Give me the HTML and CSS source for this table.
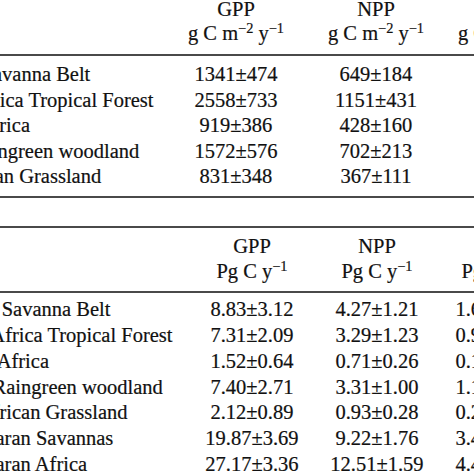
FILE: index.html
```html
<!DOCTYPE html>
<html>
<head>
<meta charset="utf-8">
<link rel="stylesheet" href="styles.css">
</head>
<body>
<div class="page">
  <table class="tbl tbl-density">
    <colgroup>
      <col class="c-label"><col class="c-num"><col class="c-num"><col class="c-last">
    </colgroup>
    <thead>
      <tr class="h1"><th></th><th>GPP</th><th>NPP</th><th></th></tr>
      <tr class="h2"><th></th><th>g C m<span class="sup">−2</span> y<span class="sup">−1</span></th><th>g C m<span class="sup">−2</span> y<span class="sup">−1</span></th><th>g C m<span class="sup">−2</span> y<span class="sup">−1</span></th></tr>
    </thead>
    <tbody>
      <tr class="first"><td>Guinean Savanna Belt</td><td>1341±474</td><td>649±184</td><td></td></tr>
      <tr><td>Central Africa Tropical Forest</td><td>2558±733</td><td>1151±431</td><td></td></tr>
      <tr><td>Western Africa</td><td>919±386</td><td>428±160</td><td></td></tr>
      <tr><td>Humid Raingreen woodland</td><td>1572±576</td><td>702±213</td><td></td></tr>
      <tr class="last"><td>West African Grassland</td><td>831±348</td><td>367±111</td><td></td></tr>
    </tbody>
  </table>

  <table class="tbl tbl-total">
    <colgroup>
      <col class="c-label"><col class="c-num"><col class="c-num2"><col class="c-last">
    </colgroup>
    <thead>
      <tr class="h1"><th></th><th>GPP</th><th>NPP</th><th></th></tr>
      <tr class="h2"><th></th><th>Pg C y<span class="sup">−1</span></th><th>Pg C y<span class="sup">−1</span></th><th>Pg C y<span class="sup">−1</span></th></tr>
    </thead>
    <tbody>
      <tr class="first"><td>Sahelian Savanna Belt</td><td>8.83±3.12</td><td>4.27±1.21</td><td>1.64±0.48</td></tr>
      <tr><td>Central Africa Tropical Forest</td><td>7.31±2.09</td><td>3.29±1.23</td><td>0.95±0.41</td></tr>
      <tr><td>Western Africa</td><td>1.52±0.64</td><td>0.71±0.26</td><td>0.18±0.07</td></tr>
      <tr><td>Eastern Raingreen woodland</td><td>7.40±2.71</td><td>3.31±1.00</td><td>1.19±0.36</td></tr>
      <tr><td>South African Grassland</td><td>2.12±0.89</td><td>0.93±0.28</td><td>0.27±0.10</td></tr>
      <tr><td>Sub-Saharan Savannas</td><td>19.87±3.69</td><td>9.22±1.76</td><td>3.45±0.66</td></tr>
      <tr class="last"><td>Sub-Saharan Africa</td><td>27.17±3.36</td><td>12.51±1.59</td><td>4.40±0.78</td></tr>
    </tbody>
  </table>
</div>
</body>
</html>
```

FILE: styles.css
```css
html, body {
  margin: 0;
  padding: 0;
  width: 474px;
  height: 474px;
  overflow: hidden;
  background: #ffffff;
}

.page {
  font-family: "Liberation Serif", "Times New Roman", serif;
  font-size: 20.5px;
  color: #111;
  -webkit-text-stroke: 0.2px #111;
  display: flex;
  flex-direction: column;
}

.tbl {
  border-collapse: collapse;
  table-layout: fixed;
}

.tbl th,
.tbl td {
  padding: 0;
  line-height: 25.4px;
  height: 25.4px;
  white-space: nowrap;
  text-align: center;
  font-weight: normal;
}

.tbl td:first-child,
.tbl th:first-child {
  text-align: left;
}

.sup {
  font-size: 0.7em;
  vertical-align: 0.5em;
  line-height: 0;
}

/* top table */
.tbl-density {
  width: 659px;
  margin-left: -93px;
}
.tbl-density .c-label { width: 259px; }
.tbl-density .c-num { width: 140px; }
.tbl-density .c-last { width: 120px; }

.tbl-density .h1 th {
  line-height: 19px;
  height: 19px;
}
.tbl-density .h2 th {
  padding-top: 2px;
  padding-bottom: 8px;
  border-bottom: 2px solid #4a4a4a;
}
.tbl-density .first td { padding-top: 6px; }
.tbl-density .last td {
  padding-bottom: 7px;
  border-bottom: 2px solid #4a4a4a;
}

/* bottom table */
.tbl-total {
  width: 628px;
  margin-left: -74px;
  margin-top: 28px;
  border-top: 2px solid #4a4a4a;
}
.tbl-total .c-label { width: 264px; }
.tbl-total .c-num { width: 124px; }
.tbl-total .c-num2 { width: 126px; }
.tbl-total .c-last { width: 114px; }

.tbl-total .h1 th { padding-top: 5.5px; }
.tbl-total .h2 th {
  padding-bottom: 6.5px;
  border-bottom: 2px solid #4a4a4a;
}
.tbl-total .first td { padding-top: 4px; }
.tbl-total td { line-height: 25.8px; height: 25.8px; }
```
